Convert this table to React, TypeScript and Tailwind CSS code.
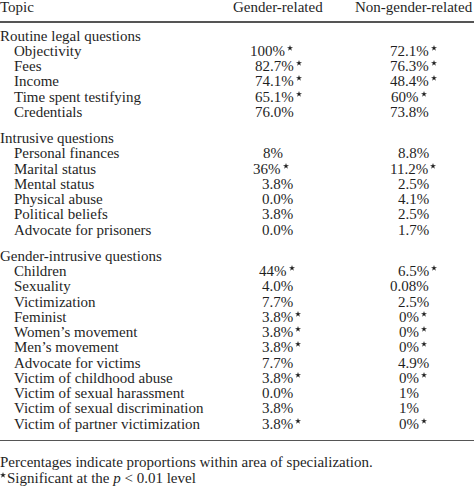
const pad: Record<number, string> = {
  0: 'pl-0',
  1: 'pl-[1px]',
  3: 'pl-[3px]',
  5: 'pl-[5px]',
  8: 'pl-[8px]',
  9: 'pl-[9px]',
  12: 'pl-[12px]',
  13: 'pl-[13px]',
};

type Row = [string, string, number, string, number];

const sections: { title: string; rows: Row[] }[] = [
  {
    title: 'Routine legal questions',
    rows: [
      ['Objectivity', '100%*', 0, '72.1%*', 0],
      ['Fees', '82.7%*', 5, '76.3%*', 0],
      ['Income', '74.1%*', 5, '48.4%*', 0],
      ['Time spent testifying', '65.1%*', 5, '60%*', 1],
      ['Credentials', '76.0%', 5, '73.8%', 0],
    ],
  },
  {
    title: 'Intrusive questions',
    rows: [
      ['Personal finances', '8%', 13, '8.8%', 8],
      ['Marital status', '36%*', 3, '11.2%*', 0],
      ['Mental status', '3.8%', 12, '2.5%', 8],
      ['Physical abuse', '0.0%', 12, '4.1%', 8],
      ['Political beliefs', '3.8%', 12, '2.5%', 8],
      ['Advocate for prisoners', '0.0%', 12, '1.7%', 8],
    ],
  },
  {
    title: 'Gender-intrusive questions',
    rows: [
      ['Children', '44%*', 9, '6.5%*', 8],
      ['Sexuality', '4.0%', 12, '0.08%', 0],
      ['Victimization', '7.7%', 12, '2.5%', 8],
      ['Feminist', '3.8%*', 12, '0%*', 9],
      ['Women’s movement', '3.8%*', 12, '0%*', 9],
      ['Men’s movement', '3.8%*', 12, '0%*', 9],
      ['Advocate for victims', '7.7%', 12, '4.9%', 8],
      ['Victim of childhood abuse', '3.8%*', 12, '0%*', 9],
      ['Victim of sexual harassment', '0.0%', 12, '1%', 9],
      ['Victim of sexual discrimination', '3.8%', 12, '1%', 9],
      ['Victim of partner victimization', '3.8%*', 12, '0%*', 9],
    ],
  },
];

function Star({ before }: { before?: boolean }) {
  return (
    <svg
      viewBox="0 0 10 10"
      className={`inline-block w-[6px] h-[6px] align-[5px] ${before ? 'mr-[1px]' : 'ml-[2px]'}`}
    >
      <polygon points="5,0 6.2,3.6 10,3.6 6.9,5.8 8.1,9.5 5,7.2 1.9,9.5 3.1,5.8 0,3.6 3.8,3.6" fill="#1f1f1f" />
    </svg>
  );
}

function Value({ v, offset }: { v: string; offset: number }) {
  const starred = v.endsWith('*');
  return (
    <div className={`whitespace-nowrap ${pad[offset]}`}>
      {starred ? v.slice(0, -1) : v}
      {starred && <Star />}
    </div>
  );
}

export default function App() {
  return (
    <div className="w-[474px] h-[488px] overflow-hidden bg-white text-[#1f1f1f] text-[15px] leading-[15.25px] font-['Liberation_Serif',serif]">
      {/* Header */}
      <div className="grid grid-cols-[233px_122px_1fr] h-[21px] whitespace-nowrap">
        <div>Topic</div>
        <div>Gender-related</div>
        <div>Non-gender-related</div>
      </div>
      <div className="h-[1.5px] bg-[#555]" />

      <div className="pt-[6px]">
        {sections.map((s, i) => (
          <div key={s.title} className={i > 0 ? 'mt-[11px]' : ''}>
            <div>{s.title}</div>
            {s.rows.map(([name, v1, o1, v2, o2]) => (
              <div key={name} className="grid grid-cols-[250px_140px_1fr]">
                <div className="pl-[14px] whitespace-nowrap">{name}</div>
                <Value v={v1} offset={o1} />
                <Value v={v2} offset={o2} />
              </div>
            ))}
          </div>
        ))}
      </div>

      <div className="mt-[8px] h-[1.5px] bg-[#555]" />

      {/* Notes */}
      <div className="pt-[14px]">
        <div className="whitespace-nowrap">Percentages indicate proportions within area of specialization.</div>
        <div className="whitespace-nowrap">
          <Star before />
          Significant at the <span className="italic">p</span> &lt; 0.01 level
        </div>
      </div>
    </div>
  );
}
